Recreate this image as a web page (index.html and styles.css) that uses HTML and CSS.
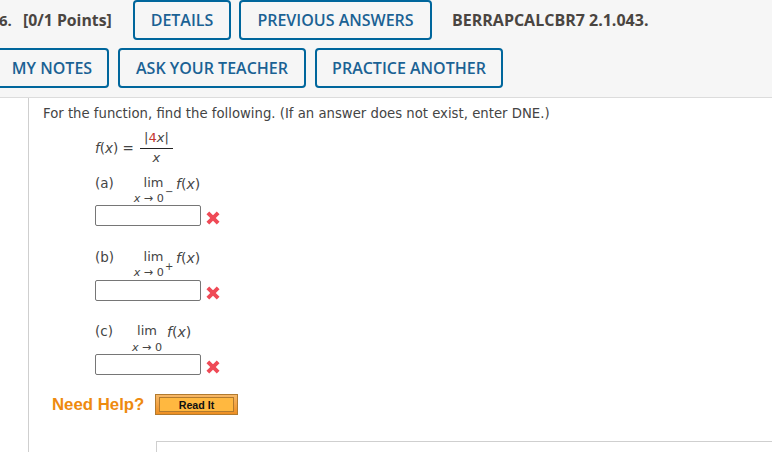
FILE: index.html
```html
<!DOCTYPE html>
<html lang="en">
<head>
<meta charset="utf-8">
<title>Question 6</title>
<link rel="stylesheet" href="styles.css">
</head>
<body>
<header class="head">
  <div class="row row-top">
    <span class="num">6.</span>
    <span class="pts">[0/1 Points]</span>
    <a class="btn btn-details">DETAILS</a>
    <a class="btn btn-prev">PREVIOUS ANSWERS</a>
    <span class="ref">BERRAPCALCBR7 2.1.043.</span>
  </div>
  <div class="row row-bottom">
    <a class="btn btn-notes">MY NOTES</a>
    <a class="btn btn-ask">ASK YOUR TEACHER</a>
    <a class="btn btn-practice">PRACTICE ANOTHER</a>
  </div>
</header>
<main class="body">
  <p class="prompt">For the function, find the following. (If an answer does not exist, enter DNE.)</p>
  <div class="func">
    <span class="m"><i>f</i>(<i>x</i>) =</span>
    <span class="frac"><span class="top">|<span class="red">4</span><i>x</i>|</span><span class="bot"><i>x</i></span></span>
  </div>

  <section class="part part-a">
    <div class="lim-line">
      <span class="label">(a)</span>
      <span class="lim lim-side"><span class="lim-word">lim</span><span class="lim-sub"><i>x</i> → 0<sup class="sign sign-minus">−</sup></span></span>
      <span class="m fx"><i>f</i>(<i>x</i>)</span>
    </div>
    <div class="answer"><span class="input"></span><svg class="cross" viewBox="0 0 14 14"><path d="M2.5 2.5 11.5 11.5M11.5 2.5 2.5 11.5"/></svg></div>
  </section>

  <section class="part part-b">
    <div class="lim-line">
      <span class="label">(b)</span>
      <span class="lim lim-side"><span class="lim-word">lim</span><span class="lim-sub"><i>x</i> → 0<sup class="sign">+</sup></span></span>
      <span class="m fx"><i>f</i>(<i>x</i>)</span>
    </div>
    <div class="answer"><span class="input"></span><svg class="cross" viewBox="0 0 14 14"><path d="M2.5 2.5 11.5 11.5M11.5 2.5 2.5 11.5"/></svg></div>
  </section>

  <section class="part part-c">
    <div class="lim-line">
      <span class="label">(c)</span>
      <span class="lim lim-plain"><span class="lim-word">lim</span><span class="lim-sub"><i>x</i> → 0</span></span>
      <span class="m fx"><i>f</i>(<i>x</i>)</span>
    </div>
    <div class="answer"><span class="input"></span><svg class="cross" viewBox="0 0 14 14"><path d="M2.5 2.5 11.5 11.5M11.5 2.5 2.5 11.5"/></svg></div>
  </section>

  <div class="help">
    <span class="need">Need Help?</span>
    <a class="readit"><span>Read It</span></a>
  </div>
  <div class="next-box"></div>
</main>
</body>
</html>
```
FILE: styles.css
```css
* { box-sizing: border-box; }
html, body { margin: 0; padding: 0; }
body { width: 772px; height: 452px; overflow: hidden; background: #fff; font-family: "DejaVu Sans", sans-serif; }

.head { height: 98px; background: #f6f6f6; border-bottom: 1px solid #dcdcdc; font-family: "Open Sans", sans-serif; }
.row { display: flex; align-items: center; height: 40px; }
.row-bottom { margin-top: 8px; margin-left: -5px; }
.num, .pts, .ref { font-weight: 700; font-size: 16px; color: #4a4541; white-space: nowrap; }
.num { margin-left: -1px; width: 24px; font-size: 15px; }
.pts { width: 110px; font-size: 15.8px; }
.ref { margin-left: 20px; }
.btn { display: flex; align-items: center; justify-content: center; height: 40px; border: 2px solid #00669c; border-radius: 4px; color: #1b6294; font-size: 16px; font-weight: 600; white-space: nowrap; }
.btn-details { width: 98px; margin-right: 8px; }
.btn-prev { width: 193px; }
.btn-notes { width: 114px; }
.btn-ask { width: 188px; margin-left: 9px; }
.btn-practice { width: 188px; margin-left: 9px; }

.body { height: 354px; margin-left: 28px; border-left: 1px solid #cfcfcf; padding-left: 14px; color: #444; }
.prompt { margin: 0; padding-top: 8px; font-size: 13.25px; line-height: 16px; white-space: nowrap; }

.func { display: flex; align-items: center; margin: 8px 0 0 52px; height: 35px; font-size: 13px; }
.m { font-size: 13.5px; color: #444; white-space: nowrap; }
.frac { display: flex; flex-direction: column; align-items: center; width: 33px; margin: 2px 0 0 6px; font-size: 13px; }
.top { border-bottom: 1px solid #222; width: 100%; text-align: center; line-height: 15px; height: 19px; }
.red { color: #c5352e; }
.bot { line-height: 18px; font-size: 13px; }

.part { margin-left: 52px; }
.part-a { margin-top: 9px; }
.part-b { margin-top: 23px; }
.part-c { margin-top: 22px; }
.lim-line { display: flex; height: 31px; font-size: 13px; }
.part-b .lim-line, .part-c .lim-line { margin-top: -1px; height: 32px; }
.label { font-size: 13.5px; line-height: 16px; width: 36px; padding-top: 1px; }
.lim { display: flex; flex-direction: column; align-items: center; }
.lim-side { width: 45px; }
.lim-plain { width: 32px; }
.lim-word { font-size: 13px; line-height: 18px; }
.lim-sub { font-size: 11.2px; line-height: 14px; white-space: nowrap; }
.part-c .lim-sub { padding-top: 1px; }
.sign { font-size: 10px; line-height: 0; vertical-align: 6px; margin-left: 1px; }
.sign-minus { vertical-align: 7px; }
.lim-plain + .fx { margin-left: 4px; }
.fx { font-size: 14px; line-height: 18px; padding-top: 1px; }

.answer { display: flex; align-items: center; height: 21px; }
.input { width: 106px; height: 21px; border: 1px solid #767676; border-radius: 2px; background: #fff; flex: none; }
.cross { width: 16px; height: 16px; margin: 5px 0 0 4px; fill: none; stroke: #ef4a56; stroke-width: 3.4; flex: none; }

.help { display: flex; align-items: center; margin: 19px 0 0 9px; height: 21px; }
.need { font-family: "Liberation Sans", sans-serif; font-weight: 700; font-size: 16.8px; color: #ee8a0f; width: 103px; }
.readit { display: flex; width: 83px; height: 21px; padding: 2px 3px; background: linear-gradient(#f6b868, #ee8f22); border: 1px solid #b27a2e; }
.readit span { flex: 1; display: flex; align-items: center; justify-content: center; background: #ffb840; border: 1px solid #b27a2e; font-family: "Liberation Sans", sans-serif; font-weight: 700; font-size: 10.7px; color: #111; }
.next-box { margin: 26px 0 0 113px; height: 11px; border-top: 1px solid #cfcfcf; border-left: 1px solid #cfcfcf; }
```
